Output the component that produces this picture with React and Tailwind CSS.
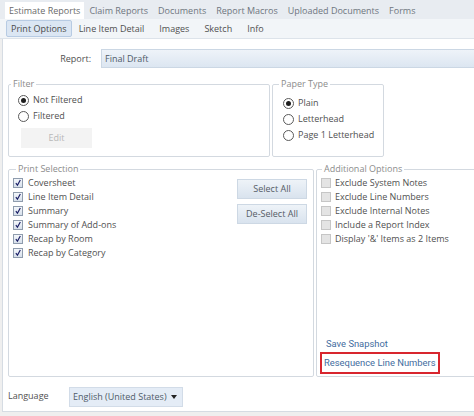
import React from 'react';

const topTabs = ['Estimate Reports', 'Claim Reports', 'Documents', 'Report Macros', 'Uploaded Documents', 'Forms'];
const subTabs = ['Print Options', 'Line Item Detail', 'Images', 'Sketch', 'Info'];

const printItems = ['Coversheet', 'Line Item Detail', 'Summary', 'Summary of Add-ons', 'Recap by Room', 'Recap by Category'];
const extraItems = ['Exclude System Notes', 'Exclude Line Numbers', 'Exclude Internal Notes', 'Include a Report Index', "Display '&' Items as 2 Items"];

function Radio({ checked, label }) {
  return (
    <div className="flex items-center h-[16px]">
      <span className="w-[11px] h-[11px] rounded-full border border-[#5a5a5a] bg-white flex items-center justify-center shrink-0">
        {checked && <span className="w-[5px] h-[5px] rounded-full bg-[#1e1e1e]" />}
      </span>
      <span className="ml-[4px] text-[#505050]">{label}</span>
    </div>
  );
}

function Check({ checked, label }) {
  return (
    <div className="flex items-center h-[14px]">
      {checked ? (
        <span className="w-[10px] h-[10px] border border-[#8f9cad] bg-linear-to-b from-[#f4f7fb] to-[#d7e0eb] flex items-center justify-center shrink-0">
          <svg viewBox="0 0 10 10" className="w-[10px] h-[10px]">
            <path d="M2.3 5.3 L4.3 7.8 L7.9 1.3" stroke="#1b1f66" strokeWidth="1.5" fill="none" />
          </svg>
        </span>
      ) : (
        <span className="w-[10px] h-[10px] border border-[#c6c6c6] bg-[#e4e4e4] shrink-0" />
      )}
      <span className={checked ? 'ml-[5px] text-[#505050]' : 'ml-[4px] text-[#505050]'}>{label}</span>
    </div>
  );
}

function Legend({ children, className }) {
  return <legend className={'px-[2px] leading-[12px] text-[#8c8c8c] ' + className}>{children}</legend>;
}

export default function App() {
  return (
    <div className="w-[474px] h-[416px] overflow-hidden bg-[#efefef] font-['Open_Sans',sans-serif] text-[9px] leading-[12px]">
      {/* Top tabs */}
      <div className="h-[19px] bg-[#e8ecf1] flex items-end pl-[5px]">
        {topTabs.map((t, i) => (
          <div
            key={t}
            className={
              i === 0
                ? 'h-[17px] bg-white px-[4px] flex items-center text-[#6a6a6a]'
                : 'h-[17px] px-[5px] flex items-center text-[#6f7680]'
            }
          >
            {t}
          </div>
        ))}
      </div>

      {/* Sub tabs */}
      <div className="h-[20px] bg-[#f2f5f8] border-b border-[#dde3ea] flex items-center pl-[6px] gap-[15px] w-[500px]">
        {subTabs.map((t, i) => (
          <div
            key={t}
            className={
              i === 0
                ? 'h-[17px] px-[4px] -mr-[8px] flex items-center bg-[#dbe6f3] border border-[#b7cbe3] rounded-[2px] text-[#4a4a4a]'
                : 'text-[#505050]'
            }
          >
            {t}
          </div>
        ))}
      </div>

      {/* Main panel */}
      <div className="ml-[2px] w-[520px] h-[373px] bg-white border-l border-b border-[#d6dce3] pl-[5px] flex flex-col">
        <div className="mt-[10px] flex items-center">
          <span className="w-[83px] text-right text-[#505050]">Report:</span>
          <div className="ml-[10px] flex-1 h-[19px] border border-[#cbd7e4] bg-linear-to-b from-[#eef3f9] to-[#dce6f1] flex items-center pl-[3px] text-[#4f5b68]">
            Final Draft
          </div>
        </div>

        <div className="mt-[10px] flex gap-[2px]">
          <fieldset className="w-[262px] h-[79px] border border-[#d3d9e0] rounded-[2px] flex flex-col">
            <Legend className="ml-[2px]">Filter</Legend>
            <div className="pl-[9px] pt-[2px]">
              <Radio checked label="Not Filtered" />
              <Radio label="Filtered" />
              <div className="mt-[4px] ml-[3px] w-[71px] h-[20px] bg-[#f3f3f3] flex items-center justify-center text-[#b8b8b8]">Edit</div>
            </div>
          </fieldset>
          <fieldset className="w-[112px] h-[79px] border border-[#d3d9e0] rounded-[2px] flex flex-col">
            <Legend className="ml-[6px]">Paper Type</Legend>
            <div className="pl-[10px] pt-[5px]">
              <Radio checked label="Plain" />
              <Radio label="Letterhead" />
              <Radio label="Page 1 Letterhead" />
            </div>
          </fieldset>
        </div>

        <div className="mt-[6px] flex gap-[2px]">
          <fieldset className="w-[306px] h-[214px] border border-[#d3d9e0] rounded-[2px] flex flex-col">
            <Legend className="ml-[7px]">Print Selection</Legend>
            <div className="flex-1 pl-[4px] pr-[6px] pt-[1px] flex justify-between">
              <div className="flex flex-col">
                {printItems.map((t) => (
                  <Check key={t} checked label={t} />
                ))}
              </div>
              <div className="flex flex-col gap-[5px] mt-[3px]">
                {['Select All', 'De-Select All'].map((b) => (
                  <div
                    key={b}
                    className="w-[70px] h-[20px] border border-[#cdd8e4] bg-linear-to-b from-[#eef3f8] to-[#d9e3ee] flex items-center justify-center text-[#555c66]"
                  >
                    {b}
                  </div>
                ))}
              </div>
            </div>
          </fieldset>
          <fieldset className="flex-1 h-[214px] border border-[#d3d9e0] rounded-[2px] flex flex-col">
            <Legend className="ml-[5px]">Additional Options</Legend>
            <div className="flex-1 pl-[4px] pt-[1px] flex flex-col">
              {extraItems.map((t) => (
                <Check key={t} label={t} />
              ))}
              <div className="mt-auto mb-[2px] flex flex-col items-start font-['Roboto',sans-serif] text-[9.4px] text-[#3f6c9e]">
                <span className="ml-[5px] mb-[2px] leading-[12px]">Save Snapshot</span>
                <span className="-ml-[1px] h-[22px] px-[2px] border-2 border-[#d8262e] flex items-center">Resequence Line Numbers</span>
              </div>
            </div>
          </fieldset>
        </div>

        <div className="flex-1 flex items-center pt-[5px]">
          <span className="w-[61px] text-[#505050] mt-[-1px]">Language</span>
          <div className="w-[114px] h-[20px] border border-[#d2dce8] bg-[#e4ecf6] flex items-center justify-between pl-[3px] pr-[5px] text-[#4f5b68]">
            <span>English (United States)</span>
            <svg viewBox="0 0 6 4" className="w-[6px] h-[4px]">
              <path d="M0 0 L6 0 L3 4 Z" fill="#222" />
            </svg>
          </div>
        </div>
      </div>
    </div>
  );
}
